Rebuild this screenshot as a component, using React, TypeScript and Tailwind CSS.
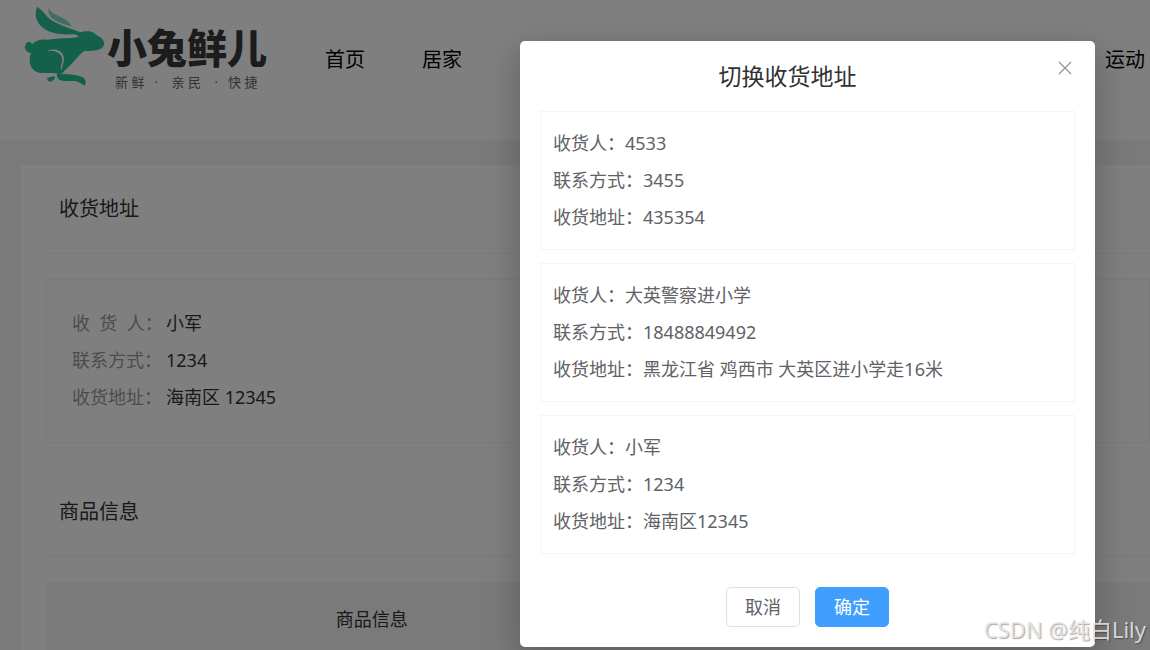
import { useState } from "react";

const navItems = ["首页", "居家", "运动"];

const addresses = [
  { id: 1, receiver: "4533", contact: "3455", address: "435354" },
  { id: 2, receiver: "大英警察进小学", contact: "18488849492", address: "黑龙江省 鸡西市 大英区进小学走16米" },
  { id: 3, receiver: "小军", contact: "1234", address: "海南区12345" },
];

function Logo() {
  return (
    <a href="/" className="flex w-[310px] shrink-0 pl-[15px]">
      <svg className="h-[95px] w-[100px] shrink-0" viewBox="0 0 300 285" fill="#28c296">
        {/* ears */}
        <path d="M66 20C82 30 92 46 105 58C125 72 165 86 197 97C190 101 184 103 176 103C145 104 112 101 92 89C66 73 56 48 66 20Z" />
        <path opacity="0.6" d="M101 24C108 40 124 45 142 53C156 60 166 69 171 80C150 73 124 66 110 53C101 44 98 34 101 24Z" />
        {/* tail, body and head */}
        <path d="M176 102L197 97C203 94 212 93 222 94C233 94 241 103 251 109C262 115 269 123 267 135C264 149 238 155 208 152C192 164 178 183 166 196C156 205 149 211 143 219L130 221C108 217 92 220 75 219C54 215 43 200 44 178C44 170 46 164 49 159C41 160 29 151 29 141C32 138 33 134 34 130C38 122 49 125 51 133C60 122 77 117 98 119C130 114 160 116 188 112C192 109 190 106 176 102Z" />
        <path fill="#fff" d="M99 152C118 144 138 149 145 167C151 184 140 196 141 208L138 208C135 198 146 183 140 170C133 156 117 151 99 154Z" />
        {/* feet */}
        <path d="M128 214C134 220 138 222 146 222C165 223 185 224 201 231C214 237 214 247 209 257C201 254 192 245 180 243C164 242 146 245 134 240C127 236 124 228 126 219Z" />
        <path d="M94 237C101 232 110 230 120 229C121 238 112 245 104 245C98 244 100 238 94 237Z" />
      </svg>
      <span className="-ml-2 flex flex-col gap-1 whitespace-nowrap pt-7 text-[#383838]">
        <span className="text-[40px] font-black leading-10">小兔鲜儿</span>
        <span className="whitespace-pre pl-2 text-[13px] leading-5 text-[#666]">{"新 鲜   ·    亲 民    ·   快 捷"}</span>
      </span>
    </a>
  );
}

function AddressRow({ label, value }: { label: string; value: string }) {
  return (
    <li className="flex">
      <span className="w-[94px] shrink-0 whitespace-pre text-[#999]">{label}</span>
      <span>{value}</span>
    </li>
  );
}

export default function App() {
  const [showDialog, setShowDialog] = useState(true);
  const [active, setActive] = useState<number | null>(null);

  return (
    <div className="relative h-screen overflow-hidden bg-[#f5f5f5] font-['Noto_Sans','Noto_Sans_CJK_SC',sans-serif] text-lg text-[#333]">
      <header className="flex h-[140px] bg-white">
        <Logo />
        <nav className="mr-[5px] ml-[15px] flex h-[120px] flex-1 items-center gap-[57px] text-xl text-black">
          {navItems.map((item) => (
            <a key={item} href="#" className="whitespace-nowrap last:ml-auto">
              {item}
            </a>
          ))}
        </nav>
      </header>

      <main className="mt-[25px] ml-[21px] bg-white pl-[25px]">
        {/* Address */}
        <h3 className="border-b border-[#f5f5f5] pl-[13px] text-xl leading-[88px]">收货地址</h3>
        <div className="mt-[25px] border border-[#f5f5f5] pt-[25px] pb-[26px] pl-[25px]">
          <ul className="leading-[37px]">
            <AddressRow label={"收  货  人："} value="小军" />
            <AddressRow label="联系方式：" value="1234" />
            <AddressRow label="收货地址：" value="海南区 12345" />
          </ul>
        </div>

        {/* Goods */}
        <h3 className="mt-[25px] border-b border-[#f5f5f5] pl-[13px] text-xl leading-[88px]">商品信息</h3>
        <table className="mt-[25px] w-full bg-[#f5f5f5]">
          <thead>
            <tr>
              <th className="w-[59%] font-normal leading-[75px]">商品信息</th>
              <th />
            </tr>
          </thead>
        </table>
      </main>

      {/* Switch address dialog */}
      {showDialog && (
        <div className="absolute inset-0 flex items-start justify-end bg-black/50 pt-[41px] pr-[55px]">
          <div
            role="dialog"
            aria-labelledby="dialog-title"
            className="relative w-[50vw] rounded-[5px] bg-white p-5 text-[#606266] shadow-[0_12px_32px_4px_rgba(0,0,0,0.2)]"
          >
            <h2 id="dialog-title" className="pr-10 text-center text-[23px] leading-[30px] text-[#303133]">
              切换收货地址
            </h2>
            <button
              type="button"
              aria-label="关闭"
              onClick={() => setShowDialog(false)}
              className="absolute top-5 right-[23px] text-[#909399]"
            >
              <svg className="size-[14px]" viewBox="0 0 14 14" fill="none" stroke="currentColor" strokeWidth="1.2">
                <path d="M1 1L13 13M13 1L1 13" />
              </svg>
            </button>

            <div className="mt-5 flex flex-col gap-[13px]">
              {addresses.map((item) => (
                <ul
                  key={item.id}
                  onClick={() => setActive(item.id)}
                  className={`cursor-pointer border px-3 py-[13px] leading-[37px] ${
                    active === item.id ? "border-[#27ba9b] bg-[#e3f9f4]" : "border-[#f5f5f5]"
                  }`}
                >
                  <li>收货人：{item.receiver}</li>
                  <li>联系方式：{item.contact}</li>
                  <li>收货地址：{item.address}</li>
                </ul>
              ))}
            </div>

            <div className="mt-[33px] flex justify-center gap-[15px]">
              <button
                type="button"
                onClick={() => setShowDialog(false)}
                className="h-10 rounded-[5px] border border-[#dcdfe6] px-[18px]"
              >
                取消
              </button>
              <button
                type="button"
                onClick={() => setShowDialog(false)}
                className="h-10 rounded-[5px] border border-[#409eff] bg-[#409eff] px-[18px] text-white"
              >
                确定
              </button>
            </div>
          </div>
        </div>
      )}

      <span className="absolute right-1 bottom-[5px] text-[22px] leading-8 text-[#e6e6e6]/90 [text-shadow:1px_1px_1px_rgba(0,0,0,0.35)]">
        CSDN @纯白Lily
      </span>
    </div>
  );
}
